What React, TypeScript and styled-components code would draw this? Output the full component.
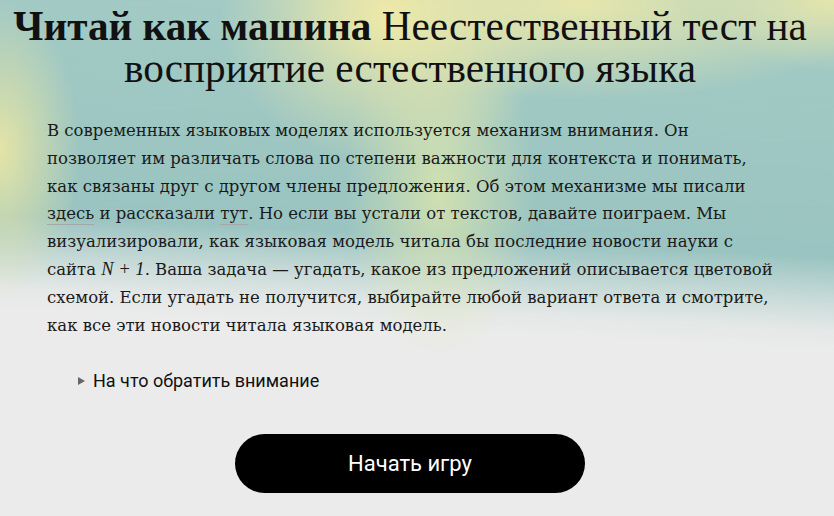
import React from "react";
import styled, { createGlobalStyle } from "styled-components";

const GlobalStyle = createGlobalStyle`
  html, body {
    margin: 0;
    padding: 0;
    background: #ebebeb;
  }
  body {
    overflow: hidden;
  }
`;

const Page = styled.main`
  width: 834px;
  min-height: 516px;
  box-sizing: border-box;
  padding: 5px 14px 0 0;
  background:
    radial-gradient(ellipse 170px 150px at 390px 15px, rgba(238, 233, 168, 1), rgba(238, 233, 168, 0)),
    radial-gradient(ellipse 300px 95px at 580px 5px, rgba(234, 232, 170, 0.95), rgba(234, 232, 170, 0)),
    radial-gradient(ellipse 95px 170px at 440px 190px, rgba(222, 231, 172, 0.8), rgba(222, 231, 172, 0)),
    radial-gradient(ellipse 80px 150px at 0px 150px, rgba(228, 228, 166, 1), rgba(228, 228, 166, 0)),
    radial-gradient(ellipse 140px 70px at 834px 0px, rgba(232, 230, 170, 0.95), rgba(232, 230, 170, 0)),
    linear-gradient(183deg, #a4cbc5 0%, #9ac4c1 46%, #c4d9d6 53%, #e4e8e7 59%, #ebebeb 63%, #ebebeb 100%);
`;

const Column = styled.div`
  width: 820px;
  display: flex;
  flex-direction: column;
  align-items: center;
`;

const Title = styled.h1`
  margin: 0;
  font-family: "Liberation Serif", "Times New Roman", serif;
  font-size: 41.2px;
  line-height: 42px;
  font-weight: 400;
  color: #111;
  text-align: center;
  white-space: nowrap;
`;

const Strong = styled.b`
  font-weight: 700;
`;

const Lead = styled.p`
  align-self: stretch;
  margin: 28px 0 0;
  padding: 0 10px 0 47px;
  font-family: "DejaVu Serif", "Liberation Serif", serif;
  font-size: 16.5px;
  line-height: 27.8px;
  color: #1a1a1a;
`;

const Link = styled.a`
  color: inherit;
  text-decoration: underline;
  text-decoration-color: #a2aaa9;
  text-decoration-thickness: 1px;
  text-underline-offset: 5px;
`;

const Em = styled.i`
  font-family: "Liberation Serif", serif;
  font-size: 18.5px;
  font-style: italic;
`;

const Hint = styled.details`
  align-self: stretch;
  margin: 31px 0 0;
  padding-left: 78px;
  font-family: Roboto, "Noto Sans", sans-serif;
  font-size: 18px;
  color: #111;
`;

const HintSummary = styled.summary`
  list-style: none;
  display: flex;
  align-items: center;
  gap: 8px;
  cursor: pointer;
  &::-webkit-details-marker {
    display: none;
  }
`;

const Arrow = styled.span`
  width: 0;
  height: 0;
  border-top: 4.5px solid transparent;
  border-bottom: 4.5px solid transparent;
  border-left: 7px solid #666;
`;

const StartButton = styled.button`
  margin: 43px 0 0;
  width: 350px;
  height: 59px;
  border: none;
  border-radius: 30px;
  background: #000;
  color: #fff;
  font-family: Roboto, "Noto Sans", sans-serif;
  font-size: 22px;
  cursor: pointer;
`;

export default function App() {
  return (
    <>
      <GlobalStyle />
      <Page>
        <Column>
          <Title>
            <Strong>Читай как машина</Strong> Неестественный тест на
            <br />
            восприятие естественного языка
          </Title>
          <Lead>
            В современных языковых моделях используется механизм внимания. Он
            <br />
            позволяет им различать слова по степени важности для контекста и понимать,
            <br />
            как связаны друг с другом члены предложения. Об этом механизме мы писали
            <br />
            <Link href="#">здесь</Link> и рассказали <Link href="#">тут</Link>. Но
            если вы устали от текстов, давайте поиграем. Мы
            <br />
            визуализировали, как языковая модель читала бы последние новости науки с
            <br />
            сайта <Em>N + 1</Em>. Ваша задача — угадать, какое из предложений
            описывается цветовой
            <br />
            схемой. Если угадать не получится, выбирайте любой вариант ответа и
            смотрите,
            <br />
            как все эти новости читала языковая модель.
          </Lead>
          <Hint>
            <HintSummary>
              <Arrow />
              На что обратить внимание
            </HintSummary>
          </Hint>
          <StartButton type="button">Начать игру</StartButton>
        </Column>
      </Page>
    </>
  );
}
